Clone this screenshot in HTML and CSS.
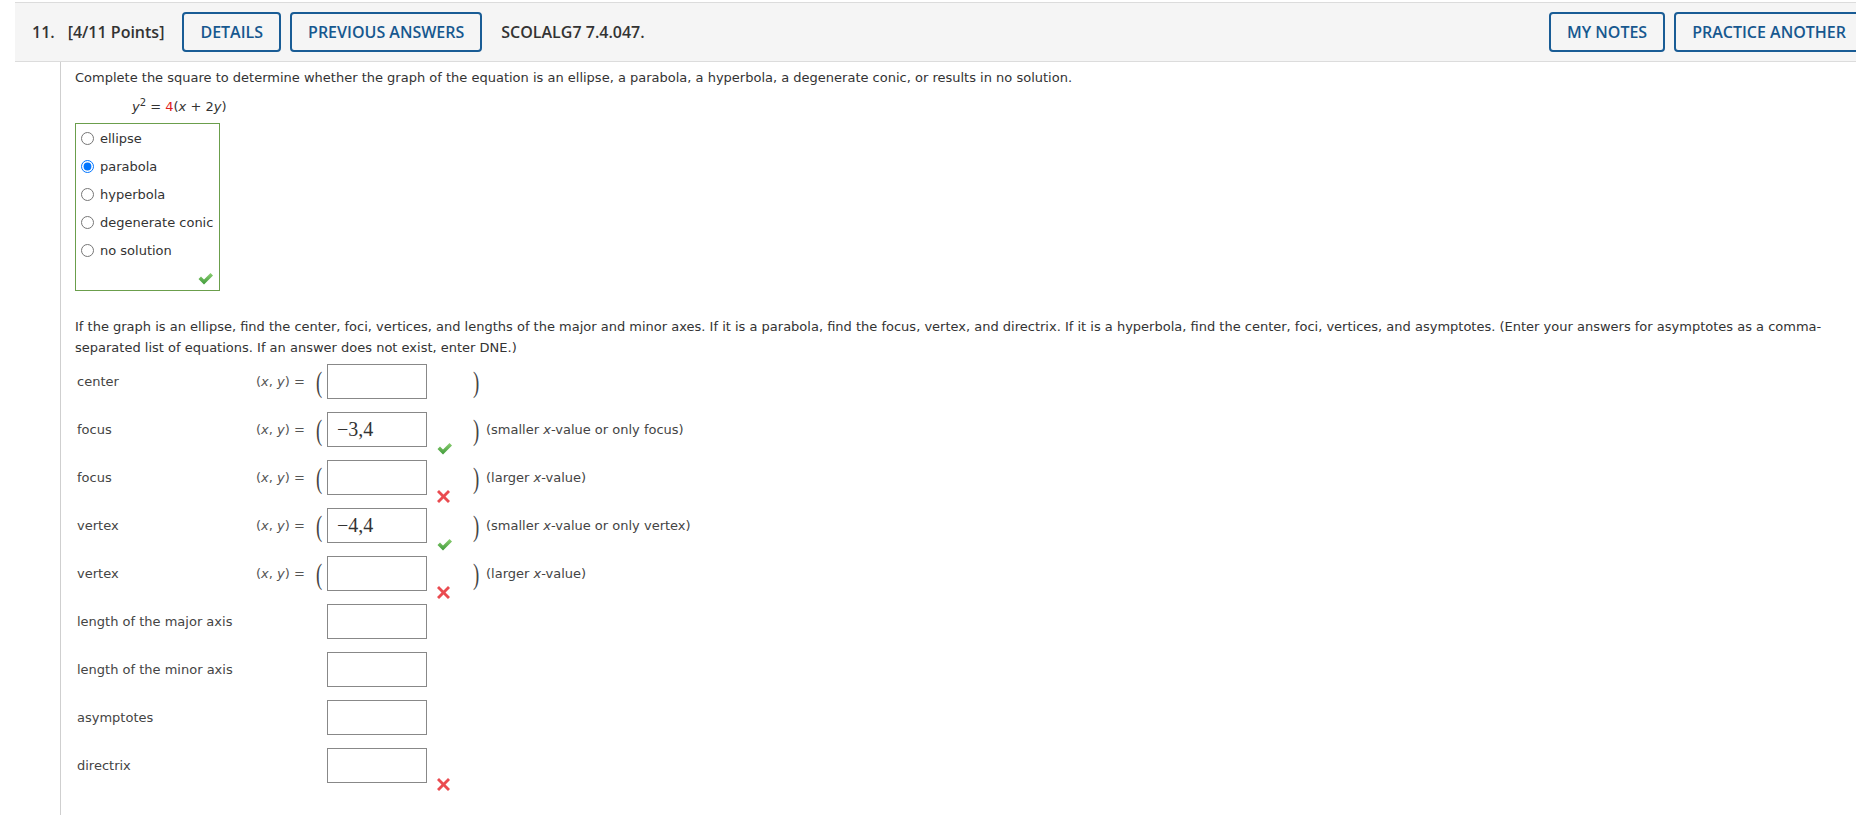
FILE: index.html
```html
<!DOCTYPE html>
<html lang="en">
<head>
    <meta charset="UTF-8">
    <meta name="viewport" content="width=device-width, initial-scale=1.0">
    <title>Question 11</title>
    <link rel="stylesheet" href="styles.css">
</head>
<body>
    <!-- Question header -->
    <div class="qhead">
        <div class="qhead-left">
            <span class="qnum">11.</span>
            <span class="qpts">[4/11 Points]</span>
            <a href="#" class="hbtn btn-details">DETAILS</a>
            <a href="#" class="hbtn">PREVIOUS ANSWERS</a>
            <span class="qref">SCOLALG7 7.4.047.</span>
        </div>
        <div class="qhead-right">
            <a href="#" class="hbtn">MY NOTES</a>
            <a href="#" class="hbtn">PRACTICE ANOTHER</a>
        </div>
    </div>

    <div class="qbody">
        <p class="prompt">Complete the square to determine whether the graph of the equation is an ellipse, a parabola, a hyperbola, a degenerate conic, or results in no solution.</p>
        <p class="equation"><i>y</i><sup>2</sup> = <span class="red">4</span>(<i>x</i> + 2<i>y</i>)</p>

        <!-- Choices -->
        <div class="choices">
            <label class="choice"><input type="radio" name="conic">ellipse</label>
            <label class="choice"><input type="radio" name="conic" checked>parabola</label>
            <label class="choice"><input type="radio" name="conic">hyperbola</label>
            <label class="choice"><input type="radio" name="conic">degenerate conic</label>
            <label class="choice"><input type="radio" name="conic">no solution</label>
            <div class="choices-mark">
                <svg class="icon-ok" width="15" height="13" viewBox="0 0 15 13"><defs><linearGradient id="g1" x1="0" y1="0" x2="0" y2="1"><stop offset="0" stop-color="#8ccf72"/><stop offset="1" stop-color="#3f9a3a"/></linearGradient></defs><path d="M0.5 7 L3 4.5 L6 7.5 L12.5 1 L15 3.5 L6 12.5 Z" fill="url(#g1)"/></svg>
            </div>
        </div>

        <p class="instr">If the graph is an ellipse, find the center, foci, vertices, and lengths of the major and minor axes. If it is a parabola, find the focus, vertex, and directrix. If it is a hyperbola, find the center, foci, vertices, and asymptotes. (Enter your answers for asymptotes as a comma-separated list of equations. If an answer does not exist, enter DNE.)</p>

        <!-- Answers -->
        <div class="answers">
            <div class="row">
                <span class="lbl">center</span>
                <span class="xy">(<i>x</i>, <i>y</i>) =</span>
                <span class="paren">(</span>
                <span class="box"></span>
                <span class="mark"></span>
                <span class="paren">)</span>
            </div>
            <div class="row">
                <span class="lbl">focus</span>
                <span class="xy">(<i>x</i>, <i>y</i>) =</span>
                <span class="paren">(</span>
                <span class="box">&minus;3,4</span>
                <span class="mark"><svg width="15" height="13" viewBox="0 0 15 13"><defs><linearGradient id="g2" x1="0" y1="0" x2="0" y2="1"><stop offset="0" stop-color="#8ccf72"/><stop offset="1" stop-color="#3f9a3a"/></linearGradient></defs><path d="M0.5 7 L3 4.5 L6 7.5 L12.5 1 L15 3.5 L6 12.5 Z" fill="url(#g2)"/></svg></span>
                <span class="paren">)</span>
                <span class="hint">(smaller <i>x</i>-value or only focus)</span>
            </div>
            <div class="row">
                <span class="lbl">focus</span>
                <span class="xy">(<i>x</i>, <i>y</i>) =</span>
                <span class="paren">(</span>
                <span class="box"></span>
                <span class="mark"><svg width="13" height="13" viewBox="0 0 13 13"><path d="M2 0 L6.5 4.5 L11 0 L13 2 L8.5 6.5 L13 11 L11 13 L6.5 8.5 L2 13 L0 11 L4.5 6.5 L0 2 Z" fill="#ea4b50"/></svg></span>
                <span class="paren">)</span>
                <span class="hint">(larger <i>x</i>-value)</span>
            </div>
            <div class="row">
                <span class="lbl">vertex</span>
                <span class="xy">(<i>x</i>, <i>y</i>) =</span>
                <span class="paren">(</span>
                <span class="box">&minus;4,4</span>
                <span class="mark"><svg width="15" height="13" viewBox="0 0 15 13"><defs><linearGradient id="g3" x1="0" y1="0" x2="0" y2="1"><stop offset="0" stop-color="#8ccf72"/><stop offset="1" stop-color="#3f9a3a"/></linearGradient></defs><path d="M0.5 7 L3 4.5 L6 7.5 L12.5 1 L15 3.5 L6 12.5 Z" fill="url(#g3)"/></svg></span>
                <span class="paren">)</span>
                <span class="hint">(smaller <i>x</i>-value or only vertex)</span>
            </div>
            <div class="row">
                <span class="lbl">vertex</span>
                <span class="xy">(<i>x</i>, <i>y</i>) =</span>
                <span class="paren">(</span>
                <span class="box"></span>
                <span class="mark"><svg width="13" height="13" viewBox="0 0 13 13"><path d="M2 0 L6.5 4.5 L11 0 L13 2 L8.5 6.5 L13 11 L11 13 L6.5 8.5 L2 13 L0 11 L4.5 6.5 L0 2 Z" fill="#ea4b50"/></svg></span>
                <span class="paren">)</span>
                <span class="hint">(larger <i>x</i>-value)</span>
            </div>
            <div class="row">
                <span class="lbl">length of the major axis</span>
                <span class="xy"></span>
                <span class="paren"></span>
                <span class="box"></span>
            </div>
            <div class="row">
                <span class="lbl">length of the minor axis</span>
                <span class="xy"></span>
                <span class="paren"></span>
                <span class="box"></span>
            </div>
            <div class="row">
                <span class="lbl">asymptotes</span>
                <span class="xy"></span>
                <span class="paren"></span>
                <span class="box"></span>
            </div>
            <div class="row">
                <span class="lbl">directrix</span>
                <span class="xy"></span>
                <span class="paren"></span>
                <span class="box"></span>
                <span class="mark"><svg width="13" height="13" viewBox="0 0 13 13"><path d="M2 0 L6.5 4.5 L11 0 L13 2 L8.5 6.5 L13 11 L11 13 L6.5 8.5 L2 13 L0 11 L4.5 6.5 L0 2 Z" fill="#ea4b50"/></svg></span>
            </div>
        </div>
    </div>
</body>
</html>
```

FILE: styles.css
```css
body {
    font-family: "DejaVu Sans", Verdana, sans-serif;
    font-size: 13px;
    color: #333;
    margin: 0;
    padding: 0;
    overflow: hidden;
}

/* Cabeçalho da questão */
.qhead {
    display: flex;
    justify-content: space-between;
    align-items: center;
    height: 58px;
    margin: 2px -12px 0 15px;
    padding: 0 4px 0 17px;
    background-color: #f5f5f5;
    border-top: 1px solid #dcdcdc;
    border-bottom: 1px solid #dcdcdc;
    font-family: "Open Sans", sans-serif;
    font-size: 16px;
    font-weight: 600;
}

.qhead-left,
.qhead-right {
    display: flex;
    align-items: center;
}

.qnum {
    color: #333;
    margin-right: 13px;
}

.qpts {
    color: #333;
    margin-right: 18px;
}

.qref {
    color: #333;
    margin-left: 19px;
}

.hbtn {
    box-sizing: border-box;
    height: 40px;
    line-height: 36px;
    padding: 0 16px;
    border: 2px solid #195c95;
    border-radius: 4px;
    color: #17588f;
    text-decoration: none;
}

.hbtn + .hbtn {
    margin-left: 9px;
}

/* Corpo da questão */
.qbody {
    margin-left: 60px;
    border-left: 1px solid #cfcfcf;
    padding: 5px 8px 40px 14px;
}

.prompt {
    margin: 0;
    line-height: 21px;
}

.equation {
    margin: 8px 0 0 57px;
    line-height: 21px;
}

.equation sup {
    font-size: 10px;
    line-height: 0;
}

.red {
    color: #e02020;
}

.choices {
    display: inline-block;
    margin-top: 6px;
    padding: 0 6px 0 0;
    border: 1px solid #6b9e4c;
}

.choice {
    display: flex;
    align-items: center;
    height: 28px;
    white-space: nowrap;
}

.choice input {
    width: 13px;
    height: 13px;
    margin: 0 6px 0 5px;
}

.choices-mark {
    display: flex;
    justify-content: flex-end;
    height: 26px;
}

.choices-mark svg {
    margin-top: 8px;
}

.instr {
    margin: 25px 0 0 0;
    line-height: 21px;
}

/* Tabela de respostas */
.answers {
    margin-top: 6px;
}

.row {
    display: flex;
    align-items: center;
    height: 35px;
    margin-bottom: 13px;
}

.lbl {
    width: 181px;
    padding-left: 2px;
    box-sizing: border-box;
    color: #444;
}

.xy {
    width: 57px;
    color: #555;
    white-space: nowrap;
}

.paren {
    width: 12px;
    font-family: "Liberation Serif", serif;
    font-size: 22px;
    font-weight: 300;
    line-height: 35px;
    color: #444;
    text-align: center;
    transform: scale(0.85, 1.35);
}

.box {
    box-sizing: border-box;
    width: 100px;
    height: 35px;
    margin-left: 2px;
    border: 1px solid #888;
    background: white;
    padding-left: 9px;
    font-family: "Liberation Serif", serif;
    font-size: 20px;
    line-height: 32px;
    color: #333;
}

.mark {
    align-self: flex-end;
    width: 33px;
    height: 13px;
    margin: 0 0 -8px 10px;
}

.mark svg {
    display: block;
}

.hint {
    margin-left: 4px;
    color: #444;
}
```
